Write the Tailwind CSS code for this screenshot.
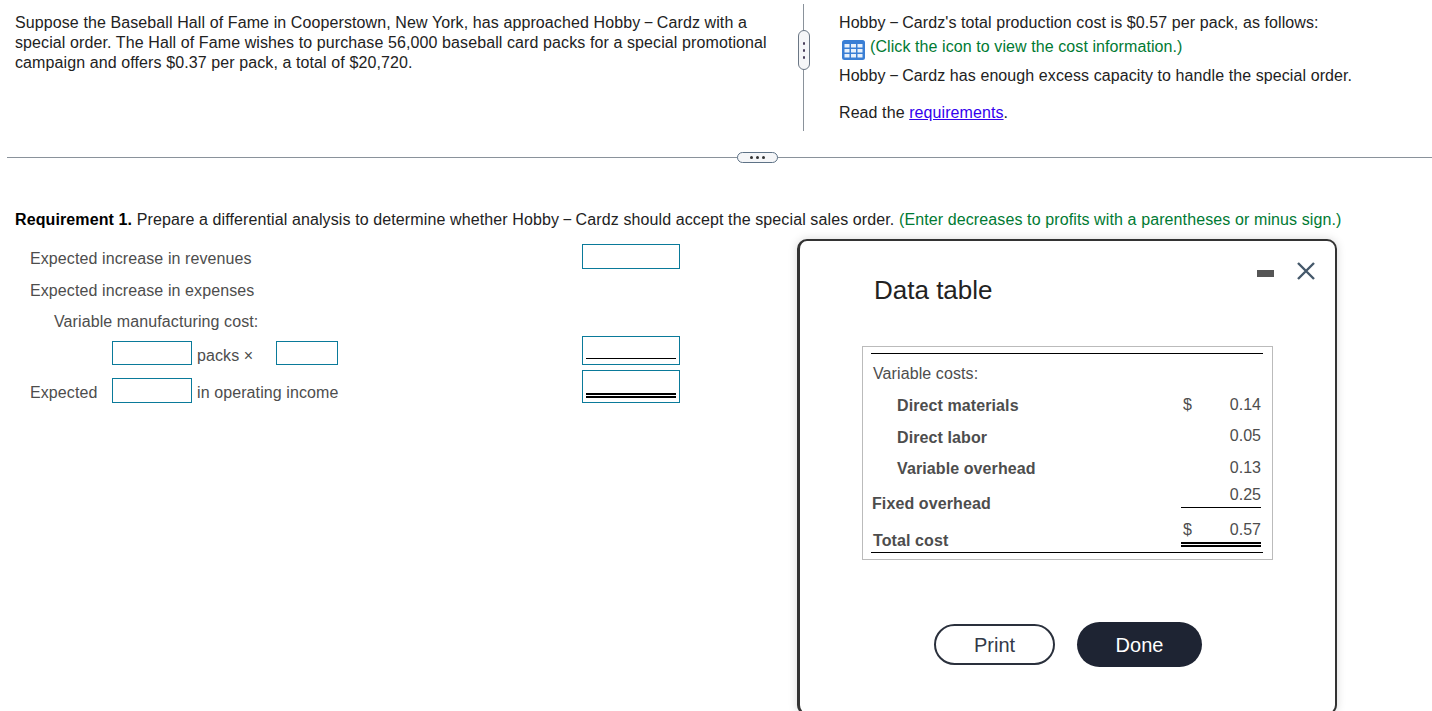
<!DOCTYPE html>
<html lang="en">
<head>
<meta charset="utf-8">
<title>Data table</title>
<script src="https://cdn.jsdelivr.net/npm/@tailwindcss/browser@4"></script>
</head>
<body class="bg-white">
<div class="relative h-[711px] w-[1432px] overflow-hidden bg-white font-['Liberation_Sans',Arial,sans-serif] text-[16px] leading-5 tracking-[0.1px] text-[#222]">

  <section class="flex h-[157px]">
    <div class="w-[803px] shrink-0 pl-[15px] pt-[13px]">
      <p class="w-[770px]">Suppose the Baseball Hall of Fame in Cooperstown, New York, has approached <span class="[word-spacing:-1px]">Hobby − Cardz</span> with a special order. The Hall of Fame wishes to purchase 56,000 baseball card packs for a special promotional campaign and offers $0.37 per pack, a total of $20,720.</p>
    </div>
    <div class="relative mt-[4px] h-[127px] w-px shrink-0 bg-[#8a929b]">
      <div class="absolute left-[-5px] top-[26px] flex h-[40px] w-[12px] flex-col items-center justify-center gap-[4px] rounded-full border border-[#6b7785] bg-[#f5f6f8]">
        <span class="h-[3px] w-[2px] rounded-full bg-[#4a3f5c]"></span>
        <span class="h-[3px] w-[2px] rounded-full bg-[#4a3f5c]"></span>
        <span class="h-[3px] w-[2px] rounded-full bg-[#4a3f5c]"></span>
      </div>
    </div>
    <div class="pl-[35px] pt-[13px] tracking-[0.085px]">
      <p><span class="[word-spacing:-1px]">Hobby − Cardz's</span> total production cost is $0.57 per pack, as follows:</p>
      <p class="mt-[4px] flex h-[20px] items-center text-[#007a33]">
        <svg class="ml-[3px] mt-[5px] mr-[5px] shrink-0" width="23" height="20" viewBox="0 0 23 20" fill="none">
          <rect width="23" height="20" rx="2.5" fill="#3a7fd5"/>
          <g fill="#e8f1fb">
            <rect x="2.5" y="4" width="5" height="3.5"/><rect x="9" y="4" width="5" height="3.5"/><rect x="15.5" y="4" width="5" height="3.5"/>
            <rect x="2.5" y="9" width="5" height="3.5"/><rect x="9" y="9" width="5" height="3.5"/><rect x="15.5" y="9" width="5" height="3.5"/>
            <rect x="2.5" y="14" width="5" height="3.5"/><rect x="9" y="14" width="5" height="3.5"/><rect x="15.5" y="14" width="5" height="3.5"/>
          </g>
        </svg>
        (Click the icon to view the cost information.)
      </p>
      <p class="mt-[9px]"><span class="[word-spacing:-1px]">Hobby − Cardz</span> has enough excess capacity to handle the special order.</p>
      <p class="mt-[17px]">Read the <a href="#" class="text-[#3300ee] underline">requirements</a>.</p>
    </div>
  </section>

  <div class="relative ml-[7px] h-px bg-[#8a929b]">
    <div class="absolute left-[730px] top-[-5px] flex h-[11px] w-[41px] items-center justify-center gap-[3px] rounded-full border border-[#5e7286] bg-[#f5f6f8]">
      <span class="h-[3px] w-[3px] rounded-full bg-[#333]"></span>
      <span class="h-[3px] w-[3px] rounded-full bg-[#333]"></span>
      <span class="h-[3px] w-[3px] rounded-full bg-[#333]"></span>
    </div>
  </div>

  <p class="ml-[15px] mt-[52px] whitespace-nowrap tracking-[0.11px]"><b class="font-bold text-black">Requirement 1.</b> Prepare a differential analysis to determine whether <span class="[word-spacing:-1px]">Hobby − Cardz</span> should accept the special sales order. <span class="text-[#007a33]">(Enter decreases to profits with a parentheses or minus sign.)</span></p>

  <section class="ml-[30px] mt-[14px] w-[650px] text-[#4d4d4d]">
    <div class="flex h-[25px] justify-between">
      <span class="pt-[5px]">Expected increase in revenues</span>
      <div class="h-[25px] w-[98px] border border-[#0a7a9a]"></div>
    </div>
    <div class="h-[67px] pt-[12px]">
      <p>Expected increase in expenses</p>
      <p class="ml-[24px] mt-[11px]">Variable manufacturing cost:</p>
    </div>
    <div class="flex h-[29px] justify-between">
      <div class="flex h-[24px] items-start self-end">
        <input class="ml-[82px] h-[24px] w-[80px] border border-[#0a7a9a]" aria-label="Packs">
        <span class="ml-[5px] w-[79px] pt-[5px]">packs ×</span>
        <input class="h-[24px] w-[62px] border border-[#0a7a9a]" aria-label="Cost per pack">
      </div>
      <div class="h-[29px] w-[98px] border border-[#0a7a9a] px-[3px]">
        <div class="h-[22px] border-b border-black"></div>
      </div>
    </div>
    <div class="mt-[5px] flex h-[33px] justify-between">
      <div class="flex h-[25px] items-start self-end">
        <span class="w-[82px] pt-[5px]">Expected</span>
        <input class="h-[25px] w-[80px] border border-[#0a7a9a]" aria-label="Change">
        <span class="ml-[5px] pt-[5px]">in operating income</span>
      </div>
      <div class="h-[33px] w-[98px] border border-[#0a7a9a] px-[3px]">
        <div class="h-[27px] border-b-[5px] border-double border-black"></div>
      </div>
    </div>
  </section>

  <div class="absolute left-[797px] top-[239px] h-[476px] w-[540px] rounded-[10px] border-2 border-l-[3px] border-[#333] bg-white shadow-[0_0_10px_rgba(0,0,0,0.15)]">
    <div class="absolute left-[457px] top-[29px] h-[7px] w-[17px] bg-[#555]"></div>
    <svg class="absolute left-[497px] top-[21px]" width="18" height="18" viewBox="0 0 18 18" fill="none" stroke="#44586a" stroke-width="2.4">
      <path d="M1 1 L17 17 M17 1 L1 17"/>
    </svg>

    <h2 class="pl-[74px] pt-[34px] text-[26px] leading-[30px] tracking-normal text-[#222]">Data table</h2>

    <div class="ml-[62px] mt-[41px] h-[214px] w-[411px] border border-[#bbb] pl-[8px] pt-[6px] text-[#4d4d4d]">
      <div class="h-[200px] w-[392px] border-y border-black">
        <div class="grid h-[35px] grid-cols-[310px_80px]">
          <span class="pl-[2px] pt-[10px]">Variable costs:</span><span></span>
        </div>
        <div class="grid h-[32px] grid-cols-[310px_80px]">
          <b class="pl-[26px] pt-[7px] font-bold">Direct materials</b>
          <span class="flex justify-between pl-[2px] pt-[6px] tracking-normal"><span>$</span><span>0.14</span></span>
        </div>
        <div class="grid h-[31px] grid-cols-[310px_80px]">
          <b class="pl-[26px] pt-[7px] font-bold">Direct labor</b>
          <span class="pt-[5px] text-right tracking-normal">0.05</span>
        </div>
        <div class="grid h-[32px] grid-cols-[310px_80px]">
          <b class="pl-[26px] pt-[7px] font-bold">Variable overhead</b>
          <span class="pt-[6px] text-right tracking-normal">0.13</span>
        </div>
        <div class="grid h-[24px] grid-cols-[310px_80px]">
          <b class="pl-[1px] pt-[10px] font-bold">Fixed overhead</b>
          <span class="h-[24px] border-b border-black pt-[1px] text-right tracking-normal">0.25</span>
        </div>
        <div class="grid h-[44px] grid-cols-[310px_80px]">
          <b class="pl-[2px] pt-[23px] font-bold">Total cost</b>
          <span class="flex h-[39px] justify-between border-b-[5px] border-double border-black pl-[2px] pt-[12px] tracking-normal"><span>$</span><span>0.57</span></span>
        </div>
      </div>
    </div>

    <div class="ml-[134px] mt-[62px] flex items-center gap-[22px] text-[20px] tracking-normal">
      <button class="h-[41px] w-[121px] rounded-full border-2 border-[#2a303c] bg-white text-[#333a48]">Print</button>
      <button class="h-[45px] w-[125px] rounded-full bg-[#1e2433] text-white">Done</button>
    </div>
  </div>
</div>
</body>
</html>
